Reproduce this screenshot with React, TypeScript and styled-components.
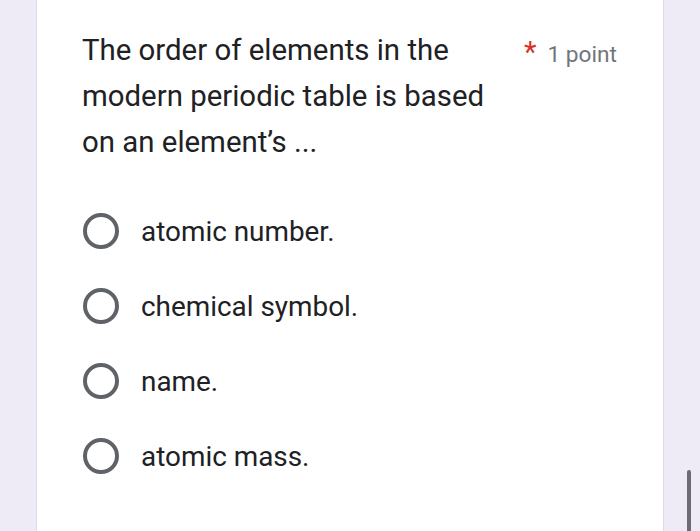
import React from "react";
import styled, { createGlobalStyle } from "styled-components";

const Global = createGlobalStyle`
  html, body { margin: 0; padding: 0; background: #eeebf6; overflow: hidden; }
  body { font-family: Roboto, "Noto Sans", Arial, sans-serif; }
`;

const Page = styled.div`
  position: relative;
  width: 700px;
  height: 531px;
  overflow: hidden;
`;

const Card = styled.div`
  margin-left: 36px;
  margin-top: -20px;
  width: 628px;
  height: 580px;
  background: #ffffff;
  border-left: 1px solid #dcdae2;
  border-right: 1px solid #dcdae2;
  padding: 47px 46px 0 46px;
  box-sizing: border-box;
`;

const Header = styled.div`
  display: flex;
  justify-content: space-between;
  align-items: flex-start;
`;

const Title = styled.div`
  font-size: 29.4px;
  line-height: 46px;
  color: #202124;
  width: 425px;
  margin-left: -1px;
`;

const Points = styled.div`
  display: flex;
  align-items: flex-start;
  gap: 11px;
  margin-top: 6px;
  margin-right: 0px;
  font-size: 22.7px;
  color: #70757a;
  line-height: 44px;
`;

const Star = styled.span`
  color: #d93025;
  font-size: 29px;
  line-height: 38px;
`;

const Options = styled.div`
  display: flex;
  flex-direction: column;
  gap: 39px;
  margin-top: 48px;
`;

const Option = styled.label`
  display: flex;
  align-items: center;
  gap: 22px;
  height: 36px;
  font-size: 27.9px;
  color: #202124;
`;

const Radio = styled.span`
  width: 36px;
  height: 36px;
  border-radius: 50%;
  border: 4px solid #5f6368;
  box-sizing: border-box;
  flex: none;
`;

const Scrollbar = styled.div`
  position: absolute;
  left: 687px;
  top: 470px;
  width: 4px;
  height: 70px;
  border-radius: 2px;
  background: #6c6c72;
`;

const options = ["atomic number.", "chemical symbol.", "name.", "atomic mass."];

export default function App() {
  return (
    <Page>
      <Global />
      <Card>
        <Header>
          <Title>
            The order of elements in the modern periodic table is based on an element’s ...
          </Title>
          <Points>
            <Star>*</Star>
            <span>1 point</span>
          </Points>
        </Header>
        <Options>
          {options.map((o) => (
            <Option key={o}>
              <Radio />
              {o}
            </Option>
          ))}
        </Options>
      </Card>
      <Scrollbar />
    </Page>
  );
}
